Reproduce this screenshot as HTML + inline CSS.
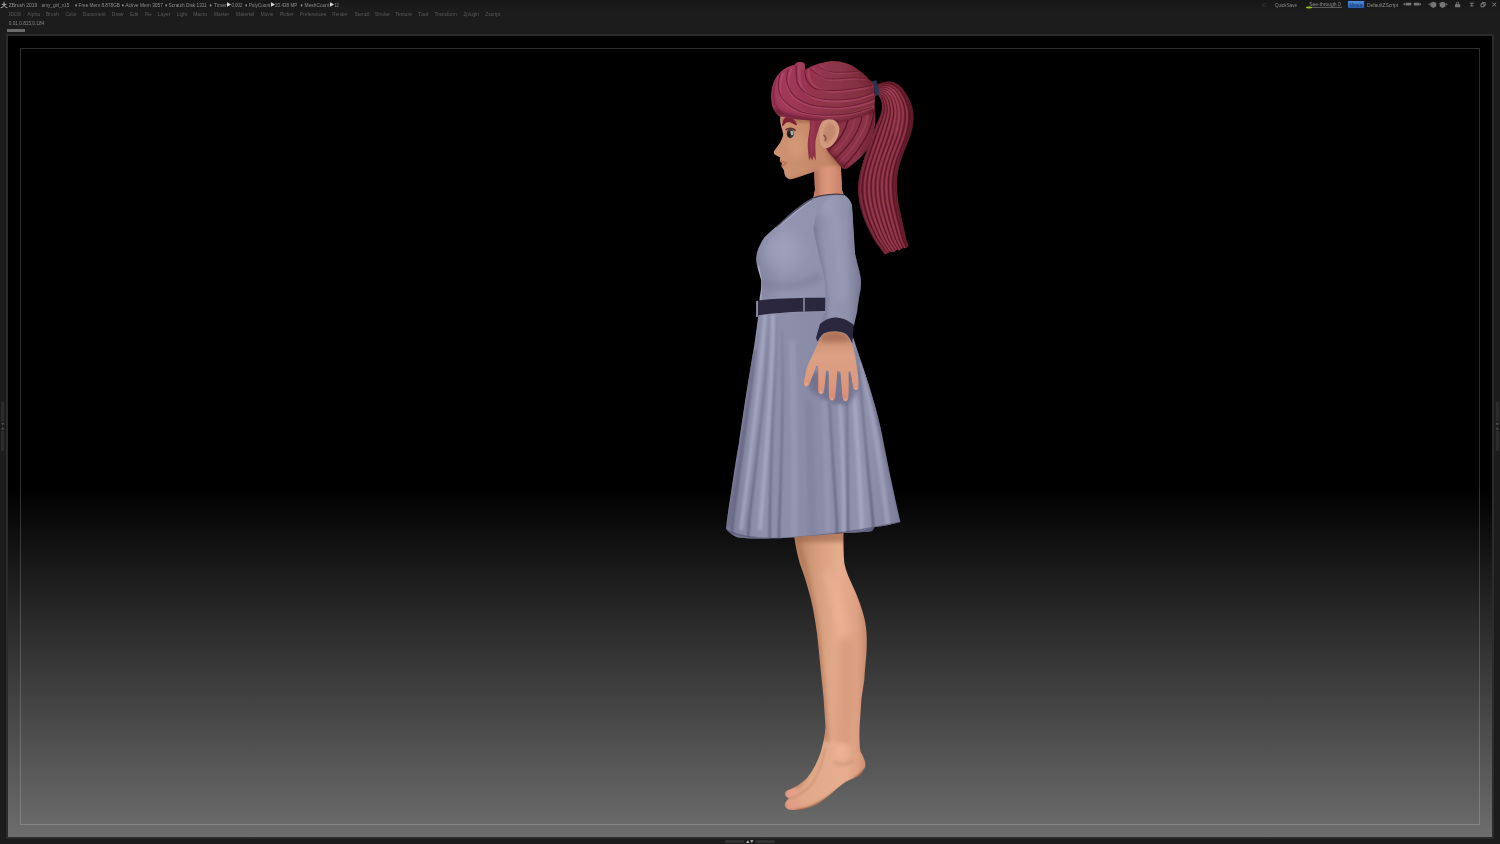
<!DOCTYPE html>
<html lang="en">
<head>
<meta charset="utf-8">
<title>ZBrush 2019 - amy_girl_v15</title>
<style>
html,body{margin:0;padding:0;width:1500px;height:844px;overflow:hidden;background:linear-gradient(to bottom,#171717 0px,#1c1c1c 12px,#1c1c1c 100%);}
body{position:relative;font-family:"Liberation Sans",sans-serif;}
#frame{position:absolute;left:6px;top:34px;width:1488px;height:805px;background:#2b2b2b;}
#canvas{position:absolute;left:8px;top:36px;width:1484px;height:801px;
  background:linear-gradient(to bottom,#000 0px,#000 448px,#020202 458px,#0a0a0a 484px,#6d6d6d 801px);}
#inner{position:absolute;left:20px;top:48px;width:1458px;height:775px;border:1px solid rgba(255,255,255,0.18);box-sizing:content-box;}
#art{position:absolute;left:0;top:0;width:1500px;height:844px;}
#ui{position:absolute;left:0;top:0;width:1500px;height:844px;will-change:transform;transform:translateZ(0);}
#ui text{font-family:"Liberation Sans",sans-serif;font-size:5.8px;}
</style>
</head>
<body>
<div id="frame"></div>
<div id="canvas"></div>
<div id="inner"></div>
<svg id="art" viewBox="0 0 1500 844" width="1500" height="844">
<defs>
  <filter id="b1" filterUnits="userSpaceOnUse" x="690" y="40" width="260" height="790"><feGaussianBlur stdDeviation="1"/></filter>
  <filter id="b15" filterUnits="userSpaceOnUse" x="690" y="40" width="260" height="790"><feGaussianBlur stdDeviation="1.5"/></filter>
  <filter id="b2" filterUnits="userSpaceOnUse" x="690" y="40" width="260" height="790"><feGaussianBlur stdDeviation="2"/></filter>
  <filter id="b3" filterUnits="userSpaceOnUse" x="690" y="40" width="260" height="790"><feGaussianBlur stdDeviation="3.5"/></filter>
  <filter id="b6" filterUnits="userSpaceOnUse" x="690" y="40" width="260" height="790"><feGaussianBlur stdDeviation="6"/></filter>
  <filter id="soft" filterUnits="userSpaceOnUse" x="690" y="40" width="260" height="790"><feGaussianBlur stdDeviation="0.6"/></filter>
  <filter id="all" filterUnits="userSpaceOnUse" x="690" y="40" width="260" height="790"><feGaussianBlur stdDeviation="0.45"/></filter>

  <linearGradient id="gLeg" gradientUnits="userSpaceOnUse" x1="795" y1="0" x2="868" y2="0">
    <stop offset="0" stop-color="#b98462"/><stop offset="0.28" stop-color="#d39d7b"/><stop offset="0.6" stop-color="#e6ad8e"/><stop offset="0.85" stop-color="#dfa184"/><stop offset="1" stop-color="#c88c70"/>
  </linearGradient>
  <linearGradient id="gDress" gradientUnits="userSpaceOnUse" x1="756" y1="0" x2="862" y2="0">
    <stop offset="0" stop-color="#8385a0"/><stop offset="0.25" stop-color="#9496b1"/><stop offset="0.7" stop-color="#9091ac"/><stop offset="1" stop-color="#8687a2"/>
  </linearGradient>
  <linearGradient id="gSkirt" gradientUnits="userSpaceOnUse" x1="725" y1="0" x2="900" y2="0">
    <stop offset="0" stop-color="#7c7e9a"/><stop offset="0.2" stop-color="#8f91ac"/><stop offset="0.5" stop-color="#8a8ba6"/><stop offset="0.8" stop-color="#9192ae"/><stop offset="1" stop-color="#7e7f9c"/>
  </linearGradient>
  <linearGradient id="gHair" gradientUnits="userSpaceOnUse" x1="772" y1="90" x2="876" y2="100">
    <stop offset="0" stop-color="#a4395c"/><stop offset="0.22" stop-color="#9e3758"/><stop offset="0.36" stop-color="#95334e"/><stop offset="0.58" stop-color="#8c354a"/><stop offset="1" stop-color="#7f2e3c"/>
  </linearGradient>
  <linearGradient id="gPony" gradientUnits="userSpaceOnUse" x1="858" y1="0" x2="914" y2="0">
    <stop offset="0" stop-color="#722639"/><stop offset="0.4" stop-color="#7a2a3a"/><stop offset="0.8" stop-color="#742736"/><stop offset="1" stop-color="#621f2d"/>
  </linearGradient>

  <clipPath id="cPony"><path d="M878.0,84.0 C880.0,83.6 886.3,81.2 890.0,81.5 C893.7,81.8 897.0,83.4 900.0,86.0 C903.0,88.6 905.9,93.3 908.0,97.0 C910.1,100.7 911.6,104.5 912.5,108.0 C913.4,111.5 913.7,114.3 913.6,118.0 C913.5,121.7 913.0,125.8 912.0,130.0 C911.0,134.2 909.2,138.5 907.5,143.0 C905.8,147.5 903.6,152.2 902.0,157.0 C900.4,161.8 898.8,167.2 898.0,172.0 C897.2,176.8 897.0,181.3 897.0,186.0 C897.0,190.7 897.4,195.5 898.0,200.0 C898.6,204.5 899.6,208.5 900.5,213.0 C901.4,217.5 902.6,222.5 903.6,227.0 C904.6,231.5 905.8,236.8 906.6,240.0 C907.4,243.2 908.3,245.0 908.6,246.0 L905.5,248.5 L903,247.5 L899.5,250.5 L897,249.5 L893,252.5 L890.5,251.5 L885,254.5 L885.0,254.5 C883.3,252.2 877.8,245.4 875.0,241.0 C872.2,236.6 870.0,232.2 868.0,228.0 C866.0,223.8 864.4,220.2 863.0,216.0 C861.6,211.8 860.3,207.3 859.5,203.0 C858.7,198.7 858.1,194.2 858.0,190.0 C857.9,185.8 858.3,182.2 859.0,178.0 C859.7,173.8 860.8,169.3 862.0,165.0 C863.2,160.7 864.7,156.2 866.0,152.0 C867.3,147.8 868.7,143.7 870.0,140.0 C871.3,136.3 872.6,133.3 874.0,130.0 C875.4,126.7 877.2,122.8 878.4,120.0 C879.6,117.2 880.6,115.3 881.2,113.0 C881.8,110.7 882.0,108.2 882.0,106.0 C882.0,103.8 881.6,101.8 881.0,100.0 C880.4,98.2 878.9,95.8 878.5,95.0 Z"/></clipPath>
  <clipPath id="cHairTop"><path d="M795.2,64.4 C795.6,62.8 797,62.1 798.6,62 L802.6,62.2 C804,62.4 804.7,63.4 804.8,65 L805.2,69.8 C809,67 818,62.6 831.8,61 C838,61 842,62 844.6,62.8 C850,64.5 854,66.5 857.4,69.2 C862,72.5 865,75 867.4,77.7 L873,83.4 L875,96 L874.5,109 C870,112.5 864,115.5 857.4,117.6 C852,119.5 847,120.5 841.8,121.1 C836,121.5 830,121 824.7,120.4 L807.7,120.3 L795,119.2 C791,118.6 788.5,117.8 786,117.4 C784,117.2 782,117.2 780.2,116.6 C778.6,115.8 777.6,114.8 776.7,113.8 C775.2,112 774,110.4 773.1,108.5 C772,105.5 771.3,101.5 771.2,97.7 C771,93 771.5,89 772.8,84.9 C774,80.5 776,76.5 779.2,73.5 C782,70.5 785,68.5 787.7,67.1 C790.5,65.8 793,65 795.2,64.4 Z"/></clipPath>
  <clipPath id="cHairBack"><path d="M826,121 L874.5,107 C875.5,113 875.5,117 875.2,121.8 C875,126 874,130.5 873,134.6 C871.5,140 869.5,144.5 867.4,148.8 C864.5,153.5 861,157 857.4,160.2 C854,163 851,165.8 847.5,168.3 C845.5,169.3 843.8,169 842.5,168.2 C840.5,166.5 838,163.5 836.1,161 L829,153.1 L826.1,148.8 Z"/></clipPath>
  <clipPath id="cSkirt"><path d="M758.9,311 L826,311 L853.6,338.5 C858,353 866,375 870,388.8 C875,405 879,420 881.7,433.3 C885,450 888,465 890.6,477.7 C894,493 897,508 900.4,522 C893,524.3 884,526 874.6,527.1 L872,531 C860,533 850,532.5 840.3,532.8 C830,534.5 818,535.5 805.9,535.9 C794,537.5 782,538.2 771.5,538.3 C758,539 745,538.4 737,537.2 C732.5,535.4 728.5,532 726,528.8 C727,518 729,505 732,485.9 C734.5,470 736.5,456 738.9,443 C741,428 744,408 747,388.8 C749.5,374 752,358 754.4,344.4 C756,333 757.5,322 758.9,311 Z"/></clipPath>
  <clipPath id="cLeg"><path d="M794,536 L843.5,533 C843.5,545 843.5,555 844.4,563.6 C846,572 850,580 853,586.4 C857,595 860,603 862.4,611 C865,619 866.2,627 866.6,633.8 C867,642 866.8,650 866.2,656.6 C865.5,665 864.6,673 864.3,680 L861.5,698.5 L859.6,727 C859.3,736 859.5,745 860.5,751.6 C862.5,755.5 864.5,759 865.3,763 C865.6,765.5 865.2,767.5 864.3,768.7 C862.8,772 861,774.5 858.7,776.2 C854,778.5 849.5,780 845.4,782 C840.5,785.5 836,789.5 832,793.3 C827,797.5 822,801.5 817,804.7 C812,807 807,808.5 801.7,809.4 C797,810.2 792.5,810.2 788.5,809.4 C786,808.5 784.7,806.5 784.7,804.7 C785,802.5 786.5,800.5 789,798.5 C786.5,797.5 785,795.5 784.8,793.5 C785.2,791.5 787,790.2 789.5,789.5 C796,787 802,783 807,778 C813,770 817.5,762 820.5,753 C823,744 825,735 825.5,727 L823.6,698.5 L820.7,670 C819.5,657 818.3,645 817,633.8 C816,625 814.5,617 813.1,609.2 C811.5,601 809.5,593.5 807.4,586.4 C805,578 802.5,571 799.8,563.6 C797.5,555 795.5,546 794,536 Z"/></clipPath>
  <linearGradient id="gCrease" gradientUnits="userSpaceOnUse" x1="0" y1="312" x2="0" y2="540">
    <stop offset="0" stop-color="#575875" stop-opacity="0.1"/><stop offset="0.35" stop-color="#575875" stop-opacity="0.55"/><stop offset="1" stop-color="#4e4f6b" stop-opacity="0.9"/>
  </linearGradient>
</defs>
<g filter="url(#all)">
<!-- ponytail -->
<g clip-path="url(#cPony)">
  <rect x="850" y="75" width="70" height="185" fill="url(#gPony)"/>
  <g fill="none" stroke-linecap="round" filter="url(#soft)">
    <path d="M878.5,94.4 C879.0,95.2 880.7,97.2 881.5,99.0 C882.3,100.7 882.8,102.7 883.0,104.9 C883.2,107.1 883.1,109.7 882.7,112.1 C882.2,114.5 881.4,116.5 880.3,119.3 C879.2,122.2 877.5,126.0 876.2,129.3 C874.9,132.7 873.6,135.8 872.3,139.4 C871.0,143.1 869.7,147.3 868.3,151.5 C867.0,155.7 865.4,160.2 864.2,164.6 C863.0,168.9 861.8,173.5 861.2,177.7 C860.5,181.9 860.1,185.6 860.2,189.8 C860.2,194.0 860.8,198.5 861.6,202.8 C862.5,207.2 863.7,211.6 865.1,215.8 C866.5,220.0 868.0,223.8 870.0,227.9 C871.9,232.1 874.0,236.6 876.8,240.9 C879.5,245.3 884.7,251.8 886.3,254.0" stroke="#a8465a" stroke-width="1.8" opacity="0.6"/>
    <path d="M878.4,93.2 C879.1,93.8 881.4,95.3 882.5,96.9 C883.6,98.5 884.5,100.4 885.0,102.7 C885.5,104.9 885.8,107.8 885.7,110.3 C885.5,112.9 884.9,115.1 884.1,118.0 C883.2,120.9 881.8,124.6 880.6,128.0 C879.4,131.4 878.3,134.6 877.0,138.3 C875.7,142.1 874.3,146.3 872.9,150.5 C871.5,154.7 869.9,159.2 868.7,163.7 C867.4,168.1 866.2,172.7 865.5,177.0 C864.8,181.3 864.4,185.1 864.5,189.3 C864.6,193.6 865.1,198.1 865.9,202.5 C866.7,206.9 867.9,211.3 869.2,215.5 C870.6,219.7 872.1,223.6 873.9,227.8 C875.8,232.1 877.8,236.6 880.3,240.8 C882.8,245.0 887.5,251.0 888.9,253.1" stroke="#a8465a" stroke-width="1.8" opacity="0.6"/>
    <path d="M878.4,91.9 C879.2,92.4 882.1,93.4 883.5,94.9 C884.9,96.3 886.1,98.2 887.0,100.4 C887.9,102.7 888.5,105.9 888.6,108.6 C888.8,111.3 888.5,113.6 887.9,116.7 C887.3,119.7 886.0,123.2 885.0,126.7 C884.0,130.1 882.9,133.4 881.7,137.2 C880.4,141.0 879.0,145.2 877.5,149.5 C876.1,153.8 874.4,158.3 873.1,162.8 C871.8,167.2 870.5,172.0 869.8,176.3 C869.1,180.7 868.8,184.6 868.8,188.9 C868.9,193.2 869.4,197.8 870.2,202.2 C871.0,206.5 872.1,210.9 873.4,215.2 C874.7,219.4 876.2,223.5 877.9,227.7 C879.6,232.0 881.5,236.7 883.8,240.7 C886.1,244.8 890.3,250.2 891.6,252.1" stroke="#a8465a" stroke-width="1.8" opacity="0.6"/>
    <path d="M878.3,90.7 C879.3,91.1 882.7,91.6 884.5,92.8 C886.3,94.1 887.8,95.9 889.0,98.2 C890.2,100.6 891.2,103.9 891.6,106.8 C892.1,109.6 892.0,112.2 891.7,115.3 C891.3,118.4 890.3,121.9 889.4,125.3 C888.5,128.8 887.5,132.2 886.3,136.1 C885.1,140.0 883.6,144.2 882.1,148.5 C880.7,152.8 878.9,157.4 877.6,161.9 C876.2,166.4 874.9,171.2 874.2,175.7 C873.4,180.1 873.1,184.1 873.2,188.4 C873.2,192.8 873.7,197.4 874.5,201.8 C875.2,206.2 876.4,210.5 877.6,214.8 C878.8,219.1 880.2,223.3 881.8,227.6 C883.5,231.9 885.2,236.7 887.3,240.6 C889.3,244.5 893.0,249.4 894.2,251.2" stroke="#a8465a" stroke-width="1.8" opacity="0.6"/>
    <path d="M878.2,89.5 C879.5,89.7 883.4,89.7 885.5,90.8 C887.6,91.8 889.5,93.6 891.0,96.0 C892.5,98.4 893.9,102.0 894.6,105.0 C895.3,108.0 895.6,110.8 895.5,114.0 C895.3,117.2 894.5,120.5 893.8,124.0 C893.1,127.5 892.2,131.1 891.0,135.0 C889.8,138.9 888.2,143.2 886.8,147.5 C885.2,151.8 883.4,156.4 882.0,161.0 C880.6,165.6 879.2,170.5 878.5,175.0 C877.8,179.5 877.5,183.6 877.5,188.0 C877.5,192.4 878.0,197.1 878.8,201.5 C879.5,205.9 880.6,210.2 881.8,214.5 C882.9,218.8 884.3,223.2 885.8,227.5 C887.3,231.8 889.0,236.7 890.8,240.5 C892.6,244.3 895.8,248.6 896.8,250.2" stroke="#a8465a" stroke-width="1.8" opacity="0.6"/>
    <path d="M878.2,88.3 C879.6,88.3 884.0,87.8 886.5,88.7 C889.0,89.6 891.2,91.4 893.0,93.8 C894.8,96.2 896.5,100.1 897.6,103.2 C898.6,106.4 899.1,109.4 899.2,112.7 C899.3,115.9 898.8,119.1 898.2,122.7 C897.6,126.2 896.8,129.9 895.7,133.9 C894.5,137.9 892.9,142.1 891.4,146.5 C889.8,150.9 887.9,155.5 886.4,160.1 C885.0,164.8 883.6,169.8 882.8,174.3 C882.1,178.9 881.8,183.1 881.8,187.6 C881.9,192.0 882.3,196.7 883.0,201.2 C883.7,205.6 884.8,209.8 885.9,214.2 C887.0,218.5 888.4,223.0 889.8,227.4 C891.2,231.8 892.7,236.7 894.3,240.4 C895.9,244.0 898.6,247.8 899.4,249.3" stroke="#a8465a" stroke-width="1.8" opacity="0.6"/>
    <path d="M878.1,87.1 C879.7,87.0 884.7,85.9 887.5,86.6 C890.3,87.4 892.8,89.1 895.0,91.6 C897.2,94.0 899.2,98.1 900.6,101.4 C901.9,104.7 902.7,108.0 903.0,111.3 C903.4,114.6 903.0,117.8 902.6,121.3 C902.2,124.9 901.4,128.8 900.3,132.8 C899.2,136.8 897.5,141.1 896.0,145.5 C894.4,149.9 892.4,154.5 890.9,159.2 C889.4,163.9 888.0,169.0 887.2,173.7 C886.4,178.3 886.1,182.6 886.2,187.1 C886.2,191.6 886.7,196.4 887.3,200.8 C888.0,205.3 889.0,209.4 890.1,213.8 C891.2,218.2 892.4,222.9 893.7,227.3 C895.0,231.7 896.4,236.8 897.8,240.3 C899.2,243.8 901.3,247.0 902.0,248.4" stroke="#a8465a" stroke-width="1.8" opacity="0.6"/>
    <path d="M878.1,85.8 C879.8,85.6 885.3,84.0 888.5,84.6 C891.7,85.2 894.5,86.8 897.0,89.3 C899.5,91.8 901.9,96.2 903.5,99.7 C905.2,103.1 906.2,106.6 906.8,110.0 C907.4,113.4 907.3,116.4 907.0,120.0 C906.7,123.6 906.1,127.6 905.0,131.7 C903.9,135.8 902.2,140.1 900.6,144.5 C899.0,148.9 896.8,153.6 895.3,158.3 C893.8,163.1 892.3,168.3 891.5,173.0 C890.7,177.7 890.5,182.1 890.5,186.7 C890.5,191.2 891.0,196.0 891.6,200.5 C892.2,205.0 893.2,209.1 894.2,213.5 C895.3,217.9 896.5,222.7 897.7,227.2 C898.8,231.6 900.2,236.8 901.3,240.2 C902.5,243.5 904.1,246.2 904.7,247.4" stroke="#a8465a" stroke-width="1.8" opacity="0.6"/>
    <path d="M878.4,93.8 C879.0,94.5 881.1,96.3 882.0,97.9 C882.9,99.6 883.6,101.6 884.0,103.8 C884.4,106.0 884.5,108.7 884.2,111.2 C883.9,113.7 883.2,115.8 882.2,118.7 C881.2,121.6 879.7,125.3 878.4,128.7 C877.1,132.0 876.0,135.2 874.7,138.9 C873.4,142.6 872.0,146.8 870.6,151.0 C869.2,155.2 867.7,159.7 866.4,164.1 C865.2,168.5 864.0,173.1 863.3,177.3 C862.6,181.6 862.3,185.3 862.3,189.6 C862.4,193.8 863.0,198.3 863.8,202.7 C864.6,207.0 865.8,211.5 867.2,215.7 C868.5,219.9 870.1,223.7 872.0,227.9 C873.8,232.1 875.9,236.6 878.5,240.9 C881.1,245.2 886.1,251.4 887.6,253.6" stroke="#4e0d1b" stroke-width="1" opacity="0.55"/>
    <path d="M878.4,92.6 C879.2,93.1 881.7,94.4 883.0,95.9 C884.3,97.4 885.3,99.3 886.0,101.6 C886.7,103.8 887.2,106.8 887.2,109.4 C887.2,112.1 886.7,114.4 886.0,117.3 C885.3,120.3 883.9,123.9 882.8,127.3 C881.7,130.7 880.6,134.0 879.3,137.8 C878.1,141.6 876.6,145.8 875.2,150.0 C873.8,154.2 872.1,158.8 870.9,163.2 C869.6,167.7 868.4,172.4 867.7,176.7 C867.0,181.0 866.6,184.8 866.7,189.1 C866.7,193.4 867.3,198.0 868.1,202.3 C868.8,206.7 870.0,211.1 871.3,215.3 C872.6,219.6 874.1,223.5 875.9,227.8 C877.7,232.0 879.6,236.6 882.0,240.8 C884.4,244.9 888.9,250.6 890.2,252.6" stroke="#4e0d1b" stroke-width="1" opacity="0.55"/>
    <path d="M878.3,91.3 C879.3,91.8 882.4,92.5 884.0,93.8 C885.6,95.2 887.0,97.0 888.0,99.3 C889.0,101.6 889.8,104.9 890.1,107.7 C890.4,110.4 890.3,112.9 889.8,116.0 C889.3,119.1 888.2,122.6 887.2,126.0 C886.2,129.4 885.2,132.8 884.0,136.7 C882.8,140.5 881.3,144.7 879.8,149.0 C878.4,153.3 876.6,157.8 875.3,162.3 C874.0,166.8 872.7,171.6 872.0,176.0 C871.3,180.4 870.9,184.3 871.0,188.7 C871.1,193.0 871.6,197.6 872.3,202.0 C873.1,206.4 874.2,210.7 875.5,215.0 C876.8,219.3 878.2,223.4 879.9,227.7 C881.5,231.9 883.4,236.7 885.5,240.7 C887.7,244.7 891.6,249.8 892.9,251.7" stroke="#4e0d1b" stroke-width="1" opacity="0.55"/>
    <path d="M878.3,90.1 C879.4,90.4 883.0,90.6 885.0,91.8 C887.0,92.9 888.6,94.8 890.0,97.1 C891.4,99.5 892.5,103.0 893.1,105.9 C893.7,108.8 893.8,111.5 893.6,114.7 C893.3,117.8 892.4,121.2 891.6,124.7 C890.8,128.1 889.9,131.7 888.7,135.6 C887.5,139.4 885.9,143.7 884.4,148.0 C883.0,152.3 881.1,156.9 879.8,161.4 C878.4,166.0 877.1,170.9 876.3,175.3 C875.6,179.8 875.3,183.8 875.3,188.2 C875.4,192.6 875.9,197.3 876.6,201.7 C877.3,206.1 878.5,210.4 879.7,214.7 C880.9,219.0 882.3,223.2 883.8,227.6 C885.4,231.9 887.1,236.7 889.0,240.6 C891.0,244.4 894.4,249.0 895.5,250.7" stroke="#4e0d1b" stroke-width="1" opacity="0.55"/>
    <path d="M878.2,88.9 C879.5,89.0 883.7,88.7 886.0,89.7 C888.3,90.7 890.3,92.5 892.0,94.9 C893.7,97.3 895.2,101.0 896.1,104.1 C897.0,107.2 897.4,110.1 897.3,113.3 C897.3,116.5 896.7,119.8 896.0,123.3 C895.3,126.9 894.5,130.5 893.3,134.4 C892.2,138.4 890.6,142.6 889.1,147.0 C887.5,151.4 885.6,155.9 884.2,160.6 C882.8,165.2 881.4,170.1 880.7,174.7 C879.9,179.2 879.6,183.3 879.7,187.8 C879.7,192.2 880.2,196.9 880.9,201.3 C881.6,205.8 882.7,210.0 883.8,214.3 C885.0,218.7 886.3,223.1 887.8,227.4 C889.2,231.8 890.8,236.7 892.6,240.4 C894.3,244.2 897.2,248.2 898.1,249.8" stroke="#4e0d1b" stroke-width="1" opacity="0.55"/>
    <path d="M878.2,87.7 C879.6,87.7 884.4,86.8 887.0,87.7 C889.6,88.5 892.0,90.2 894.0,92.7 C896.0,95.1 897.9,99.1 899.1,102.3 C900.3,105.6 900.9,108.7 901.1,112.0 C901.4,115.3 900.9,118.4 900.4,122.0 C899.9,125.6 899.1,129.3 898.0,133.3 C896.9,137.3 895.2,141.6 893.7,146.0 C892.1,150.4 890.1,155.0 888.7,159.7 C887.2,164.3 885.8,169.4 885.0,174.0 C884.2,178.6 884.0,182.8 884.0,187.3 C884.0,191.8 884.5,196.6 885.2,201.0 C885.8,205.4 886.9,209.6 888.0,214.0 C889.1,218.4 890.4,222.9 891.7,227.3 C893.1,231.7 894.6,236.8 896.1,240.3 C897.6,243.9 900.0,247.4 900.7,248.8" stroke="#4e0d1b" stroke-width="1" opacity="0.55"/>
    <path d="M878.1,86.4 C879.8,86.3 885.0,84.9 888.0,85.6 C891.0,86.3 893.7,88.0 896.0,90.4 C898.3,92.9 900.6,97.2 902.0,100.6 C903.5,103.9 904.5,107.3 904.9,110.7 C905.4,114.0 905.2,117.1 904.8,120.7 C904.4,124.3 903.8,128.2 902.7,132.2 C901.6,136.3 899.9,140.6 898.3,145.0 C896.7,149.4 894.6,154.1 893.1,158.8 C891.6,163.5 890.1,168.6 889.3,173.3 C888.5,178.0 888.3,182.3 888.3,186.9 C888.4,191.4 888.8,196.2 889.4,200.7 C890.1,205.1 891.1,209.2 892.2,213.7 C893.2,218.1 894.5,222.8 895.7,227.2 C896.9,231.6 898.3,236.8 899.6,240.2 C900.9,243.7 902.7,246.6 903.4,247.9" stroke="#4e0d1b" stroke-width="1" opacity="0.55"/>
    <path d="M878.1,85.2 C879.9,84.9 885.7,83.1 889.0,83.6 C892.3,84.1 895.3,85.7 898.0,88.2 C900.7,90.8 903.2,95.3 905.0,98.8 C906.8,102.3 908.0,105.9 908.7,109.3 C909.4,112.8 909.4,115.7 909.2,119.3 C909.0,123.0 908.4,127.0 907.3,131.1 C906.3,135.2 904.5,139.5 902.9,144.0 C901.3,148.5 899.1,153.1 897.6,157.9 C896.0,162.7 894.5,167.9 893.7,172.7 C892.9,177.4 892.7,181.8 892.7,186.4 C892.7,191.1 893.1,195.9 893.7,200.3 C894.3,204.8 895.3,208.9 896.3,213.3 C897.3,217.8 898.5,222.6 899.6,227.1 C900.8,231.6 902.0,236.8 903.1,240.1 C904.1,243.4 905.5,245.8 906.0,246.9" stroke="#4e0d1b" stroke-width="1" opacity="0.55"/>
  </g>
  <path d="M878.5,94.8 C878.9,95.6 880.5,97.8 881.2,99.6 C881.8,101.4 882.3,103.4 882.4,105.6 C882.5,107.8 882.3,110.3 881.7,112.7 C881.2,115.0 880.2,116.9 879.1,119.8 C877.9,122.6 876.2,126.4 874.8,129.8 C873.4,133.1 872.2,136.1 870.8,139.8 C869.5,143.5 868.2,147.6 866.8,151.8 C865.5,156.0 864.0,160.5 862.8,164.8 C861.6,169.2 860.4,173.7 859.8,177.9 C859.1,182.1 858.7,185.7 858.8,189.9 C858.9,194.1 859.4,198.6 860.3,202.9 C861.1,207.3 862.3,211.8 863.8,215.9 C865.2,220.1 866.7,223.8 868.7,228.0 C870.7,232.2 872.8,236.6 875.6,241.0 C878.4,245.4 883.8,252.1 885.5,254.3" fill="none" stroke="#4a0c1a" stroke-width="5" opacity="0.5" filter="url(#b2)"/>
  <path d="M878.0,84.2 C880.0,83.8 886.2,81.5 889.8,81.9 C893.4,82.2 896.7,83.8 899.6,86.4 C902.6,89.0 905.4,93.7 907.5,97.3 C909.5,101.0 910.9,104.8 911.8,108.2 C912.7,111.7 912.9,114.6 912.8,118.2 C912.7,121.9 912.2,126.0 911.2,130.2 C910.1,134.4 908.3,138.7 906.7,143.2 C905.0,147.7 902.8,152.3 901.2,157.2 C899.6,162.0 898.1,167.3 897.2,172.1 C896.4,176.9 896.2,181.4 896.2,186.1 C896.2,190.7 896.6,195.6 897.2,200.1 C897.8,204.6 898.8,208.6 899.8,213.1 C900.7,217.6 901.9,222.5 902.9,227.0 C903.9,231.5 905.1,236.8 906.0,240.0 C906.8,243.2 907.8,245.1 908.1,246.2" fill="none" stroke="#4a0c1a" stroke-width="5" opacity="0.5" filter="url(#b2)"/>
  <path d="M886.4,88.9 C887.5,89.8 891.0,91.6 892.8,94.0 C894.6,96.4 896.3,100.3 897.3,103.4 C898.3,106.5 898.8,109.6 898.9,112.8 C898.9,116.0 898.4,119.3 897.8,122.8 C897.1,126.3 895.6,132.1 895.2,134.0" fill="none" stroke="#a5455c" stroke-width="6" opacity="0.4" filter="url(#b2)"/>
</g>

<!-- far foot + legs -->
<g clip-path="url(#cLeg)">
  <rect x="780" y="530" width="95" height="285" fill="url(#gLeg)"/>
  <!-- far foot -->
  <!-- shin highlights / shades -->
  <path d="M798,540 C804,570 814,600 818,640 C821,680 826,720 826,750" fill="none" stroke="#a56c50" stroke-width="5" opacity="0.6" filter="url(#b2)"/>
  <path d="M846,540 C850,575 866,600 868,640 C868,680 862,720 862,752" fill="none" stroke="#b57b5d" stroke-width="4" opacity="0.5" filter="url(#b2)"/>
  <path d="M826,570 C832,590 840,610 844,634" fill="none" stroke="#efb596" stroke-width="9" opacity="0.6" filter="url(#b3)"/>
  <path d="M845,640 C846,690 843,725 843,745" fill="none" stroke="#c88e6e" stroke-width="16" opacity="0.4" filter="url(#b3)"/>
  
  <!-- feet lightening -->
  <path d="M822,740 C820,760 812,776 800,787 L786,795 L786,808 L806,808 L832,792 L850,776 L850,745 Z" fill="#e6ae90" opacity="0.85" filter="url(#b2)"/>
  <path d="M786,790 L796,787 L800,796 L787,797.5 Z" fill="#eaa28e" opacity="0.8" filter="url(#b1)"/>
  <path d="M785,802 L798,799 L803,808 L788,810 Z" fill="#e39c88" opacity="0.8" filter="url(#b1)"/>
  <path d="M788,798.6 C797,797.4 806,791 813,782 C819,773 823,762 825,748" fill="none" stroke="#b87a5c" stroke-width="1.6" opacity="0.55" filter="url(#b1)"/>
  <ellipse cx="841" cy="752" rx="6" ry="7" fill="#efb89a" opacity="0.6" filter="url(#b2)"/>
  <path d="M834,762 C840,766 848,765 853,760" fill="none" stroke="#c08466" stroke-width="2.5" opacity="0.5" filter="url(#b15)"/>
  <!-- foot underside shadow -->
  <path d="M796,811 C808,810.5 820,805 834,793.5 C846,783.5 858,779.5 866,769" fill="none" stroke="#6e3a26" stroke-width="2.6" opacity="0.8" filter="url(#b1)"/>
  <!-- under skirt shadow -->
  <rect x="790" y="528" width="60" height="14" fill="#9a6248" opacity="0.6" filter="url(#b2)"/>
</g>

<!-- skirt -->
<g clip-path="url(#cSkirt)">
  <rect x="720" y="305" width="185" height="240" fill="url(#gSkirt)"/>
  <g fill="none" filter="url(#b1)">
    <path d="M765,314 C762,360 757,408 741,530" stroke="#aaacc7" stroke-width="4" opacity="0.7"/>
    <path d="M773,314 C773,360 770,408 760,530" stroke="#aaacc7" stroke-width="4.5" opacity="0.7"/>
    <path d="M792,340 C794,400 795,460 794,538" stroke="#9ea0bb" stroke-width="7" opacity="0.5"/>
    <path d="M808,400 C810,440 812,490 812,536" stroke="#787995" stroke-width="8" opacity="0.35"/>
    <path d="M824,400 C826,440 828,490 828,536" stroke="#9ea0bb" stroke-width="6" opacity="0.4"/>
    <path d="M840,404 C842,440 844,490 844,534" stroke="#aaacc7" stroke-width="4" opacity="0.65"/>
    <path d="M853,380 C856,420 860,480 862,532" stroke="#aaacc7" stroke-width="5" opacity="0.7"/>
    <path d="M862,360 C870,400 880,460 888,526" stroke="#a6a7c2" stroke-width="5" opacity="0.65"/>
    <path d="M754,350 C748,400 738,470 728,528" stroke="#5e5f7c" stroke-width="4" opacity="0.55"/>
    <path d="M858,345 C874,400 890,470 902,524" stroke="#5e5f7c" stroke-width="4" opacity="0.5"/>
  </g>
  <g fill="none" filter="url(#b1)">
    <path d="M761,314 C756,360 748,408 732.9,520 L731,540" stroke="url(#gCrease)" stroke-width="1.8"/>
    <path d="M769,314 C768,360 763,408 749.2,520 L748,540" stroke="url(#gCrease)" stroke-width="1.7"/>
    <path d="M777,316 C777,360 771.5,408 769.8,520 L769.6,540" stroke="url(#gCrease)" stroke-width="1.6"/>
    <path d="M782,330 C783,370 783.6,408 779.3,520 L779,540" stroke="url(#gCrease)" stroke-width="1.6"/>
    <path d="M829,404 L830,408 C832,450 835,490 836.8,520 L837,536" stroke="url(#gCrease)" stroke-width="1.7"/>
    <path d="M846,402 L847,408 C847.5,450 848,490 848,520 L848,536" stroke="url(#gCrease)" stroke-width="1.6"/>
    <path d="M856,350 C860,380 862,400 862.6,408 C866,450 870,490 872.9,520 L873.5,532" stroke="url(#gCrease)" stroke-width="2.0"/>
  </g>
  <!-- hem shade -->
  <path d="M733,533 C740,536.5 756,538.4 771.5,538.6 L771.5,541 L730,540 Z" fill="#6e6f8c" opacity="0.85"/>
  <path d="M840,532.6 C852,532.4 864,531 874,527.5 L872,534 L840,536 Z" fill="#585975" opacity="0.9"/>
  <path d="M724,528 C735,536.5 760,538.6 771.5,538.5 C800,538 840,533.5 874,527.5 L901,522" fill="none" stroke="#585975" stroke-width="1.4" opacity="0.7" filter="url(#soft)"/>
  <!-- hand shadow on skirt -->
  <path d="M806,372 L810,390 L822,398 L834,404 L848,404 L858,392 L858,372 Z" fill="#626380" opacity="0.6" filter="url(#b2)"/>
</g>
<defs>
  <clipPath id="cTorso"><path d="M813.3,197.6 C820,195 835,193 843.9,194.7 C848,197 850.5,200 852,205 L858,300 L826,312 L758.5,313 L759.5,298 C761,292 761.5,286 761.3,280.5 C760.5,277 759.2,274 758.4,271 C757,266.5 756,262 756.2,257.7 C756.6,253 758,248.5 760.3,244.5 C761.5,241.5 763,239 765,236.7 C769.5,232 774.5,228 779.2,223.9 C784,219.5 789,215 793.4,211.1 C797.5,208 801.5,205 804.8,202.6 C808,200.5 811,199 813.3,197.6 Z"/></clipPath>
  <clipPath id="cArm"><path d="M826,200 C832,195.5 838,194.3 843.9,194.7 C847,197 849,199.5 850.3,202.6 C851.5,206 852.2,210 852.4,213.9 L853.2,231 L853.2,246.4 C854.5,252 856,257 857,262 C858.5,267.5 860,273 860.8,278.6 C861.2,283 861,287 860.5,290 L859,297.5 L857,312 L853.8,326 L820,324.1 L822.6,317 L824.8,312.7 C825.5,307 825.7,302 825.5,297 C825.3,291 825,285.5 824.8,280.5 C824,276 823,272 822,268 L819,255.8 L816,242 L813.4,229.3 C814,220 818,208 826,200 Z"/></clipPath>
  <clipPath id="cHead"><path d="M780.3,115 L836,117 L840,150 L841,169.7 L842,190 L843.9,195.5 C835,193.5 822,195 813.3,198 L815,190 L814.4,174.5 L814.4,171.6 C811.5,172.8 808.5,173.8 805.9,174.5 C802.5,175.8 799.5,177 796.4,177.8 C794,178.8 791.8,179.4 789.8,179.2 C787.8,178.6 786.2,177.6 785.5,176.4 C784.6,174.6 784.1,172.6 784.1,170.7 C783.4,169 782,167.4 781.3,165.9 C781.3,165 781.8,164 782.2,163.1 C781,162.6 780,162 779.8,161.2 C779.6,159.8 779.9,158.6 780.3,157.4 C778.8,157 777.5,156.3 776.5,155.5 C775.3,155 774.3,154.2 773.9,153.2 C773.6,152.4 773.8,151.6 774.3,150.8 C775.8,148.4 778.4,145.2 780.3,142.2 C781.6,139.8 782.8,137.2 783.2,134.6 C783,132 782,129.5 781.3,127 C780.6,124 780.2,120.5 780.3,117.6 Z"/></clipPath>
  <clipPath id="cHand"><path d="M823.9,333.2 C828,331.5 832,331 835.6,331.3 C839.5,331.6 843,332.5 846,333.9 L851.9,343 L855.1,356 L857.7,373 C858.5,378 858.8,383.5 858.3,387.5 C857.8,389.8 856.5,390.5 855.3,390 C853.8,389.2 853,387 852.6,384.5 L850.5,372 L848.5,372 C848.8,380 849,390 848.3,398 C847.8,400.8 846.3,401.5 845,401.2 C843.3,400.6 842.6,398.5 842.3,396 L840.5,372 L837.2,371.5 C836.8,380 836,390 835,397.5 C834.4,400 833,400.8 831.5,400.5 C829.8,400 829,398 828.8,395.5 L828.7,371 L826,370.5 C825.5,378 824.8,386 823.8,391.5 C823.2,393.8 821.8,394.5 820.3,394 C818.6,393.3 818,391 818,388.5 L818.3,368 L816.3,365.5 C814.5,371 812,378 809,384.5 C807.8,386.5 806,386.8 804.8,385.8 C803.6,384.5 803.8,382 804.3,379.5 C805,375 806,371 806.9,367.7 C808.5,363 810.3,359.5 812.1,356 L818,343 Z"/></clipPath>
  <linearGradient id="gNeck" gradientUnits="userSpaceOnUse" x1="812" y1="0" x2="845" y2="0">
    <stop offset="0" stop-color="#c5836a"/><stop offset="0.5" stop-color="#de987c"/><stop offset="1" stop-color="#bf7b62"/>
  </linearGradient>
  <linearGradient id="gFace" gradientUnits="userSpaceOnUse" x1="773" y1="0" x2="842" y2="0">
    <stop offset="0" stop-color="#ce9371"/><stop offset="0.35" stop-color="#ca8f6e"/><stop offset="0.75" stop-color="#c48767"/><stop offset="1" stop-color="#b4765a"/>
  </linearGradient>
  <linearGradient id="gHand" gradientUnits="userSpaceOnUse" x1="0" y1="332" x2="0" y2="402">
    <stop offset="0" stop-color="#c88c6f"/><stop offset="0.35" stop-color="#dca084"/><stop offset="0.75" stop-color="#dc987c"/><stop offset="1" stop-color="#d88a74"/>
  </linearGradient>
  <linearGradient id="gArm" gradientUnits="userSpaceOnUse" x1="813" y1="0" x2="861" y2="0">
    <stop offset="0" stop-color="#83849f"/><stop offset="0.3" stop-color="#9495b0"/><stop offset="0.7" stop-color="#9091ac"/><stop offset="1" stop-color="#7d7e99"/>
  </linearGradient>
</defs>

<!-- torso -->
<g clip-path="url(#cTorso)">
  <rect x="750" y="190" width="115" height="130" fill="url(#gDress)"/>
  <ellipse cx="782" cy="250" rx="20" ry="18" fill="#a3a5c0" opacity="0.6" filter="url(#b6)"/>
  <path d="M760,282 C775,290 800,286 822,276" fill="none" stroke="#747591" stroke-width="7" opacity="0.55" filter="url(#b3)"/>
  <path d="M758.5,266 L761.5,281 L760.5,312" fill="none" stroke="#c6c8dd" stroke-width="1.3" opacity="0.55"/>
  <path d="M813,198 C803,204 790,214 776,227" fill="none" stroke="#35344a" stroke-width="1.6" opacity="0.7"/>
  <path d="M811,201 C802,207 792,215 780,226" fill="none" stroke="#c6c8dd" stroke-width="1" opacity="0.5"/>
</g>
<!-- belt -->
<path d="M757,300.5 C775,298.5 800,297.5 825.5,297.8 L825.5,311 C800,311.5 775,312.5 757,315.5 Z" fill="#29273c"/>
<path d="M757,301 L757,317" stroke="#b6b8cf" stroke-width="1.4" fill="none"/>
<path d="M804,298 L804,311.5" stroke="#b6b8cf" stroke-width="1.1" fill="none"/>

<!-- head / neck skin -->
<g clip-path="url(#cHead)">
  <rect x="770" y="110" width="80" height="92" fill="url(#gFace)"/>
  <path d="M812,168 L846,164 L846,200 L812,200 Z" fill="url(#gNeck)" filter="url(#b15)"/>
  <path d="M790,181 C800,180 810,177 816,173 L816.5,198" fill="none" stroke="#9c6248" stroke-width="4" opacity="0.6" filter="url(#b2)"/>
  <path d="M826,150 C832,158 838,166 846,172 L846,150 Z" fill="#8e4f3c" opacity="0.7" filter="url(#b2)"/>
  <ellipse cx="797" cy="146" rx="9" ry="12" fill="#d8a07e" opacity="0.6" filter="url(#b3)"/>
  <path d="M781,118 L836,119 L836,124 L781,122 Z" fill="#9a5f48" opacity="0.6" filter="url(#b1)"/>
  <!-- lips -->
  <path d="M779.8,161 C782.5,161.4 784.5,162.2 786.5,163 C784.8,164.6 783.2,165.6 781.6,166.2" fill="none" stroke="#b0634f" stroke-width="1.5" opacity="0.7" filter="url(#soft)"/>
  <!-- eye -->
  <ellipse cx="790.3" cy="133.6" rx="3.6" ry="4.6" fill="#3a3436"/>
  <ellipse cx="791.8" cy="133" rx="1.7" ry="2.3" fill="#b8bcc2" opacity="0.9"/>
  <ellipse cx="789.2" cy="134.4" rx="1.6" ry="2.6" fill="#1d1a1e"/>
  <path d="M785.6,130 C788.5,127.6 793,127.8 795.6,130.6" fill="none" stroke="#4a2c2a" stroke-width="1.6" opacity="0.9"/>
  <!-- brow -->
  <path d="M782.6,125.2 C783.2,121.4 784.6,118.6 786.4,117.6 C789.4,117.4 792.6,119 794.2,121 C795.2,122.2 795.8,123.4 796.2,124.6 C793.6,123 790.8,121.6 788,121.2 C786,121.8 784.2,123.4 782.6,125.2 Z" fill="#7e2036" stroke="#7e2036" stroke-width="1.3" stroke-linejoin="round"/>
  <path d="M780.7,118 L780.7,126" stroke="#e8c2a8" stroke-width="0.9" opacity="0.55" fill="none"/>
</g>
<!-- sideburn -->
<path d="M809,119 L823,120.5 C820.5,124 818.8,128 818.2,131 C816.4,136 815.4,140 815.4,143 C815.2,150 815.8,156 815.9,160.5 L813.6,156 L812.4,160.8 L810.6,157 L809.2,160.4 C808.2,154 807.6,148 807.8,143 C808.2,137 809.2,132 809.7,129 C810,125 809.8,122 809,119 Z" fill="#8e3049"/>
<path d="M813.5,122 C812,130 811.2,140 811.8,152" fill="none" stroke="#a8455f" stroke-width="2" opacity="0.6" filter="url(#b1)"/>
<!-- back hair -->
<g clip-path="url(#cHairBack)">
  <rect x="820" y="100" width="60" height="72" fill="#8a3247"/>
  <g fill="none" stroke-linecap="round" filter="url(#soft)">
    <path d="M874,112 C872,130 862,148 844,166" stroke="#5e1626" stroke-width="1.3"/>
    <path d="M868,114 C866,130 856,146 840,162" stroke="#a0435a" stroke-width="1.5" opacity="0.7"/>
    <path d="M862,116 C860,130 851,144 836,158" stroke="#5e1626" stroke-width="1.3"/>
    <path d="M855,118 C853,130 846,142 832,154" stroke="#a0435a" stroke-width="1.5" opacity="0.7"/>
    <path d="M848,120 C846,130 840,140 829,150" stroke="#5e1626" stroke-width="1.3"/>
  </g>
  <path d="M826,150 C834,160 840,166 848,170" fill="none" stroke="#4c0e1c" stroke-width="4" opacity="0.65" filter="url(#b2)"/>
  <path d="M826,120 L875,106 L875,112 L826,126 Z" fill="#4c0e1c" opacity="0.55" filter="url(#b1)"/>
  <path d="M872,108 C876,125 872,140 862,156" fill="none" stroke="#4c0e1c" stroke-width="4" opacity="0.5" filter="url(#b2)"/>
</g>
<!-- hair tie -->
<path d="M871.3,81.5 L876.2,80.3 C878.3,84.5 879.3,90 879.2,95 L875,96.2 C874.8,91 873.5,86 871.3,81.5 Z" fill="#2d3050"/>
<!-- top hair -->
<g clip-path="url(#cHairTop)">
  <rect x="765" y="55" width="115" height="72" fill="url(#gHair)"/>
  <g fill="none" stroke-linecap="round" filter="url(#soft)">
    <path d="M783,74 C780,80 779,86 779.8,91 C781,98 784,103 788,106 C796,112 810,115 825.6,115.6 C835,116 843,115.2 849.4,114 C858,112.4 866,110 873,107" stroke="#b24c6c" stroke-width="2.6" opacity="0.6"/>
    <path d="M791,69.5 C788.5,75 787.4,80 787.6,85 C788.4,91 791.5,95.5 796.2,99 C801,102.6 808,105 814.4,106.4 C823,108 833,108.4 841.4,108 C853,107.4 864,104.6 873,101" stroke="#b24c6c" stroke-width="2.6" opacity="0.6"/>
    <path d="M799.5,66 C799,72 798.6,78 800,83 C801.4,87.4 803.4,90.6 806.6,93.6 C811.5,97.2 818,99.4 824.6,100.4 C833,101.4 842,101.2 849.6,100.4 C858,99.2 866,96.8 873,94" stroke="#b24c6c" stroke-width="2.6" opacity="0.6"/>
    <path d="M808,71 C808.5,76 809.4,79 811,82 C813.6,86 817,88.6 821,89.8 C825,91.2 829.4,91.6 833.6,91.8 C842,91.8 850,90.8 857.4,89.4 C863,88.2 868,87.4 872.4,86.6" stroke="#ae4a66" stroke-width="2.4" opacity="0.55"/>
    <path d="M813,68.5 C818,74 822,77.4 826,79.4 C834,80.6 842,79.8 849.4,78.8 C855,78.4 860,78.6 865.4,79.6" stroke="#ab4a66" stroke-width="2.2" opacity="0.45"/>
    <path d="M820,65.6 C825,69.6 829,72 833.5,73.2 C842,73.6 850,72.8 857.4,72.4" stroke="#ab4a66" stroke-width="2" opacity="0.4"/>

    <path d="M776,80 C773.6,87 773,94 774,100 C775.4,105 777.6,109 781,112.6" stroke="#6a1d31" stroke-width="1" opacity="0.55"/>
    <path d="M780.3,73.9 C778.6,79 778,84.6 778.6,89.7 C779.8,95 782,99.2 785.9,102.4 C790.5,107 796,110 801.7,112 C809,114.2 817,115 825.6,115.1 C834,115.2 842,114.6 849.4,113.6 C857,112.2 865,110 871.6,107.2" stroke="#621729" stroke-width="1.1" opacity="0.75"/>
    <path d="M788.3,69.9 C786.6,74.6 786.4,79.4 787.5,84.2 C789,90 792,94.4 796.2,97.7 C801.6,101.6 808,104.2 814.4,105.6 C823,107.2 832,107.6 841.4,107.2 C852,106.4 863,103.8 872.4,100" stroke="#621729" stroke-width="1.1" opacity="0.75"/>
    <path d="M796.2,65.9 C796,71 796.2,76.4 797,81.8 C798.6,86.4 801.6,90 805.7,92.9 C811,96.4 817,98.4 824,99.3 C832,100.4 841,100.2 849.4,99.3 C858,98.2 866,95.8 872.4,92.9" stroke="#621729" stroke-width="1.1" opacity="0.75"/>
    <path d="M804.9,69.1 C805,72 805.2,75 805.7,77.8 C807.6,82.4 810.6,85.8 814.4,88.2 C820,90.4 826.6,90.6 833.5,90.5 C842,90.4 850,89.4 857.3,88.2 C862.6,87.2 867.6,86.4 871.6,85.8" stroke="#621729" stroke-width="1.1" opacity="0.75"/>
    <path d="M809.7,68.3 C815,72.4 820,76.2 825.6,78.6 C833,79.4 842,78.6 849.4,77.8 C855,77.4 860.4,77.8 865.2,78.6" stroke="#621729" stroke-width="1" opacity="0.65"/>
    <path d="M817.6,65.9 C822.6,69 828,71.4 833.5,72.3 C842,72.6 850,72 857.3,71.5" stroke="#621729" stroke-width="1" opacity="0.55"/>
  </g>
  <path d="M774,110 C790,119 820,122.6 842,122.4 C856,120.6 868,115 876,109" fill="none" stroke="#4c0f20" stroke-width="3.4" opacity="0.6" filter="url(#b15)"/>
  <path d="M771.4,86 C770,96 771.6,106 779,115" fill="none" stroke="#571427" stroke-width="3" opacity="0.35" filter="url(#b2)"/>
  <path d="M850,66 C864,74 872,84 876,96" fill="none" stroke="#571427" stroke-width="6" opacity="0.4" filter="url(#b3)"/>
  <path d="M796,64 C799,62 802,63 803.4,66 L804,70" fill="none" stroke="#b04a68" stroke-width="2.4" opacity="0.6" filter="url(#b1)"/>
</g>

<!-- ear -->
<path d="M829,119.2 C834,118.8 838.4,122.2 839.3,128 C839.8,133 837.5,139 833.5,143.8 C830.5,147 827,148.8 824.3,148.2 C821.2,147 819.9,142.5 819.4,138 C818.8,132 819.2,126.5 821.6,122.8 C823.4,120.4 826,119.4 829,119.2 Z" fill="#d29b80"/>
<path d="M829,123 C833,123 835.5,126 835.5,130 C835.3,135 832,140 827.5,143.5 C825,144 823.8,141 823.6,137 C823.4,131 825,125 829,123 Z" fill="#bd8168" opacity="0.7" filter="url(#b1)"/>
<path d="M823.5,135 C825.5,136 826.5,138.5 825,141" fill="none" stroke="#7e4638" stroke-width="1.8" opacity="0.8" filter="url(#soft)"/>
<!-- arm -->
<g clip-path="url(#cArm)">
  <rect x="808" y="190" width="58" height="140" fill="url(#gArm)"/>
  <path d="M814,226 C813.4,232 814,238 815,242 L822,270 L826,300 L824,326" fill="none" stroke="#6a6b87" stroke-width="4" opacity="0.6" filter="url(#b2)"/>
  <ellipse cx="828" cy="206" rx="12" ry="12" fill="#9a9cb8" opacity="0.75" filter="url(#b3)"/>
  <path d="M853,205 L854,246 L861,280 L858,312 L854,328" fill="none" stroke="#6a6b87" stroke-width="3" opacity="0.55" filter="url(#b2)"/>
  <path d="M836,215 C838,240 842,270 842,300" fill="none" stroke="#a4a6c1" stroke-width="8" opacity="0.5" filter="url(#b3)"/>
</g>
<path d="M813.3,197.8 C822,194.6 835,193.3 844,194.8" fill="none" stroke="#302f42" stroke-width="1.3" opacity="0.85"/>
<!-- hand -->
<g clip-path="url(#cHand)">
  <rect x="800" y="328" width="62" height="78" fill="url(#gHand)"/>
  <path d="M822,334 C830,331 840,331 848,335 L850,342 L820,342 Z" fill="#9a5f48" opacity="0.6" filter="url(#b2)"/>
  <g fill="none" stroke="#a85e46" stroke-width="1.3" opacity="0.8" filter="url(#soft)">
    <path d="M817.3,366 L817.6,388"/><path d="M827.3,371 L828,396"/><path d="M838.8,371.5 L841,397"/><path d="M849.5,371.5 L852,386"/>
  </g>
  <g fill="#e8bcaa" opacity="0.4">
    <ellipse cx="806.3" cy="384.3" rx="1.6" ry="1.5"/><ellipse cx="821" cy="392.6" rx="1.7" ry="1.5"/><ellipse cx="831.8" cy="399" rx="1.8" ry="1.5"/><ellipse cx="845.3" cy="399.8" rx="1.8" ry="1.5"/><ellipse cx="855.8" cy="388.6" rx="1.6" ry="1.5"/>
  </g>
</g>
<!-- cuff -->
<path d="M820,324.1 C824,320.5 829,318 834.3,317.6 C841,317.6 848,320 853.8,325 L852.3,343.5 C850.5,339 848.5,336 846,333.9 C843,332.3 839.5,331.5 835.6,331.3 C831.5,331 827.5,331.8 823.9,333.2 C821,335.5 819,338.5 817.4,341.7 L816,337.8 Z" fill="#29273c"/>
</g>

</svg>
<svg id="ui" viewBox="0 0 1500 844" width="1500" height="844">
<g id="titlebar">
<path d="M1.2,7.6 C2.6,7.4 3.6,6.6 4.1,5.4 C4.6,6.6 5.6,7.3 7.0,7.6 M2.2,4.4 L6.0,4.4 M4.1,2.2 L4.1,5.4" fill="none" stroke="#b8b8b8" stroke-width="0.9" stroke-linecap="round"/>
<text x="8.7" y="6.6" fill="#8e8e8e" style="font-size:5.8px" textLength="28.6" lengthAdjust="spacingAndGlyphs">ZBrush 2019</text>
<text x="41.6" y="6.6" fill="#8e8e8e" style="font-size:5.8px" textLength="27.7" lengthAdjust="spacingAndGlyphs">amy_girl_v15</text>
<text x="75.0" y="6.6" fill="#8e8e8e" style="font-size:5.8px" textLength="2.3" lengthAdjust="spacingAndGlyphs">●</text>
<text x="78.6" y="6.6" fill="#8e8e8e" style="font-size:5.8px" textLength="41.4" lengthAdjust="spacingAndGlyphs">Free Mem 8.878GB</text>
<text x="121.7" y="6.6" fill="#8e8e8e" style="font-size:5.8px" textLength="2.3" lengthAdjust="spacingAndGlyphs">●</text>
<text x="125.3" y="6.6" fill="#8e8e8e" style="font-size:5.8px" textLength="37.7" lengthAdjust="spacingAndGlyphs">Active Mem 3057</text>
<text x="165.0" y="6.6" fill="#8e8e8e" style="font-size:5.8px" textLength="2.3" lengthAdjust="spacingAndGlyphs">●</text>
<text x="168.6" y="6.6" fill="#8e8e8e" style="font-size:5.8px" textLength="38.1" lengthAdjust="spacingAndGlyphs">Scratch Disk 1311</text>
<text x="209.5" y="6.6" fill="#8e8e8e" style="font-size:5.8px" textLength="2.3" lengthAdjust="spacingAndGlyphs">●</text>
<text x="214.0" y="6.6" fill="#8e8e8e" style="font-size:5.8px" textLength="12.6" lengthAdjust="spacingAndGlyphs">Timer</text>
<text x="231.4" y="6.6" fill="#8e8e8e" style="font-size:5.8px" textLength="11.2" lengthAdjust="spacingAndGlyphs">0.002</text>
<text x="245.0" y="6.6" fill="#8e8e8e" style="font-size:5.8px" textLength="2.3" lengthAdjust="spacingAndGlyphs">●</text>
<text x="248.7" y="6.6" fill="#8e8e8e" style="font-size:5.8px" textLength="21.7" lengthAdjust="spacingAndGlyphs">PolyCount</text>
<text x="275.0" y="6.6" fill="#8e8e8e" style="font-size:5.8px" textLength="22.4" lengthAdjust="spacingAndGlyphs">20.438 MP</text>
<text x="300.6" y="6.6" fill="#8e8e8e" style="font-size:5.8px" textLength="2.3" lengthAdjust="spacingAndGlyphs">●</text>
<text x="304.6" y="6.6" fill="#8e8e8e" style="font-size:5.8px" textLength="24.8" lengthAdjust="spacingAndGlyphs">MeshCount</text>
<text x="334.4" y="6.6" fill="#8e8e8e" style="font-size:5.8px" textLength="4.4" lengthAdjust="spacingAndGlyphs">12</text>
<text x="226.9" y="6.3" fill="#d8d8d8" style="font-size:6px" textLength="4.3" lengthAdjust="spacingAndGlyphs">▶︎</text>
<text x="270.6" y="6.3" fill="#d8d8d8" style="font-size:6px" textLength="4.3" lengthAdjust="spacingAndGlyphs">▶︎</text>
<text x="329.6" y="6.3" fill="#d8d8d8" style="font-size:6px" textLength="4.3" lengthAdjust="spacingAndGlyphs">▶︎</text>
</g><g id="menubar">
<text x="8.2" y="16.0" fill="#5a5a5a" textLength="13.0" lengthAdjust="spacingAndGlyphs">3DCW</text>
<text x="27.3" y="16.0" fill="#5a5a5a" textLength="12.6" lengthAdjust="spacingAndGlyphs">Alpha</text>
<text x="45.9" y="16.0" fill="#5a5a5a" textLength="13.0" lengthAdjust="spacingAndGlyphs">Brush</text>
<text x="65.4" y="16.0" fill="#5a5a5a" textLength="11.3" lengthAdjust="spacingAndGlyphs">Color</text>
<text x="82.8" y="16.0" fill="#5a5a5a" textLength="22.9" lengthAdjust="spacingAndGlyphs">Document</text>
<text x="111.8" y="16.0" fill="#5a5a5a" textLength="11.7" lengthAdjust="spacingAndGlyphs">Draw</text>
<text x="130.0" y="16.0" fill="#5a5a5a" textLength="8.2" lengthAdjust="spacingAndGlyphs">Edit</text>
<text x="144.7" y="16.0" fill="#5a5a5a" textLength="6.9" lengthAdjust="spacingAndGlyphs">File</text>
<text x="158.1" y="16.0" fill="#5a5a5a" textLength="12.2" lengthAdjust="spacingAndGlyphs">Layer</text>
<text x="176.8" y="16.0" fill="#5a5a5a" textLength="10.4" lengthAdjust="spacingAndGlyphs">Light</text>
<text x="193.2" y="16.0" fill="#5a5a5a" textLength="13.9" lengthAdjust="spacingAndGlyphs">Macro</text>
<text x="214.0" y="16.0" fill="#5a5a5a" textLength="15.2" lengthAdjust="spacingAndGlyphs">Marker</text>
<text x="236.1" y="16.0" fill="#5a5a5a" textLength="17.8" lengthAdjust="spacingAndGlyphs">Material</text>
<text x="260.8" y="16.0" fill="#5a5a5a" textLength="12.6" lengthAdjust="spacingAndGlyphs">Movie</text>
<text x="279.9" y="16.0" fill="#5a5a5a" textLength="13.8" lengthAdjust="spacingAndGlyphs">Picker</text>
<text x="299.8" y="16.0" fill="#5a5a5a" textLength="26.4" lengthAdjust="spacingAndGlyphs">Preferences</text>
<text x="332.3" y="16.0" fill="#5a5a5a" textLength="15.2" lengthAdjust="spacingAndGlyphs">Render</text>
<text x="354.4" y="16.0" fill="#5a5a5a" textLength="15.1" lengthAdjust="spacingAndGlyphs">Stencil</text>
<text x="374.7" y="16.0" fill="#5a5a5a" textLength="14.9" lengthAdjust="spacingAndGlyphs">Stroke</text>
<text x="395.2" y="16.0" fill="#5a5a5a" textLength="16.8" lengthAdjust="spacingAndGlyphs">Texture</text>
<text x="418.1" y="16.0" fill="#5a5a5a" textLength="10.3" lengthAdjust="spacingAndGlyphs">Tool</text>
<text x="434.4" y="16.0" fill="#5a5a5a" textLength="22.4" lengthAdjust="spacingAndGlyphs">Transform</text>
<text x="463.4" y="16.0" fill="#5a5a5a" textLength="15.4" lengthAdjust="spacingAndGlyphs">Zplugin</text>
<text x="485.3" y="16.0" fill="#5a5a5a" textLength="15.0" lengthAdjust="spacingAndGlyphs">Zscript</text>
</g>
<text x="8.7" y="25.1" fill="#858585" textLength="35.5" lengthAdjust="spacingAndGlyphs">0.01,0.815,0.184</text>
<rect x="7" y="29" width="18" height="3" fill="#6a6a6a"/>
<g id="rightbar">
<text x="1261.7" y="6.6" fill="#3e3e3e" textLength="5.3" lengthAdjust="spacingAndGlyphs">AC</text>
<text x="1275.0" y="6.6" fill="#8a8a8a" textLength="22.0" lengthAdjust="spacingAndGlyphs">QuickSave</text>
<text x="1309.2" y="6.0" fill="#8e8e8e" textLength="31.6" lengthAdjust="spacingAndGlyphs">See-through 0</text>
<rect x="1311" y="6.9" width="31" height="0.8" fill="#7a7a7a"/>
<ellipse cx="1309" cy="7.5" rx="3.2" ry="0.95" fill="#8cc81a"/>
<defs><linearGradient id="gMenu" x1="0" y1="0" x2="0" y2="1"><stop offset="0" stop-color="#4f8edb"/><stop offset="1" stop-color="#2a5ca2"/></linearGradient></defs>
<rect x="1347.4" y="0.5" width="17.3" height="8" rx="1" fill="#0c2450" opacity="0.8"/>
<rect x="1348" y="1.1" width="16.1" height="6.8" rx="0.6" fill="url(#gMenu)"/>
<text x="1349.6" y="6.5" fill="#173a7c" textLength="13.2" lengthAdjust="spacingAndGlyphs">Menus</text>
<text x="1367.0" y="6.6" fill="#8e8e8e" textLength="31.0" lengthAdjust="spacingAndGlyphs">DefaultZScript</text>
<g fill="#767676">
<path d="M1403,4.2 L1405.2,2.6 L1405.2,5.8 Z"/><rect x="1405.8" y="2.8" width="5.4" height="2.8" rx="0.5"/>
<rect x="1413.8" y="2.8" width="5.2" height="2.8" rx="0.5"/><path d="M1421.6,4.2 L1419.4,2.6 L1419.4,5.8 Z"/>
<path d="M1428,4.4 L1429.6,3.2 L1429.6,5.6 Z"/><path d="M1430.2,3 L1433.5,1.8 L1436.4,3 L1436.2,6.6 L1433.4,8 L1430.6,6.4 Z"/>
<path d="M1439.4,3 L1442.7,1.8 L1445.6,3 L1445.4,6.6 L1442.6,8 L1439.8,6.4 Z"/><path d="M1447.8,4.4 L1446.2,3.2 L1446.2,5.6 Z"/>
<path d="M1455,4.2 h5.2 v3 h-5.2 Z M1456,4.4 v-1 a1.6,1.6 0 0 1 3.2,0 v1 h-0.8 v-1 a0.8,0.8 0 0 0 -1.6,0 v1 Z"/>
</g>
<g fill="none" stroke="#858585" stroke-width="0.9">
<path d="M1469.8,3.2 h4 M1470.2,6 h3.2 M1471.8,3.2 v2.8"/>
<path d="M1481,3.8 h3 v3 h-3 Z M1482.2,3.8 v-1.2 h3 v3 h-1.2"/>
<path d="M1492.2,2.6 L1496.2,6.4 M1496.2,2.6 L1492.2,6.4"/>
</g></g>
<g id="handles">
<rect x="1" y="401.5" width="3.2" height="20" rx="1" fill="#2c2c2c"/><rect x="1" y="431" width="3.2" height="20" rx="1" fill="#2c2c2c"/>
<path d="M1,423 h3.4 l-1.7,2.8 Z M1,429.8 h3.4 l-1.7,-2.8 Z" fill="#4c4c4c"/>
<rect x="1495.8" y="401.5" width="3.2" height="20" rx="1" fill="#2c2c2c"/><rect x="1495.8" y="431" width="3.2" height="20" rx="1" fill="#2c2c2c"/>
<path d="M1495.6,423 h3.4 l-1.7,2.8 Z M1495.6,429.8 h3.4 l-1.7,-2.8 Z" fill="#4c4c4c"/>
<rect x="725" y="840.2" width="19.5" height="2.8" rx="1" fill="#343434"/><rect x="755.3" y="840.2" width="19.5" height="2.8" rx="1" fill="#343434"/>
<path d="M746,843 l1.8,-2.8 l1.8,2.8 Z M750,840.2 h3.6 l-1.8,2.8 Z" fill="#b0b0b0"/>
</g>

</svg>
</body>
</html>
